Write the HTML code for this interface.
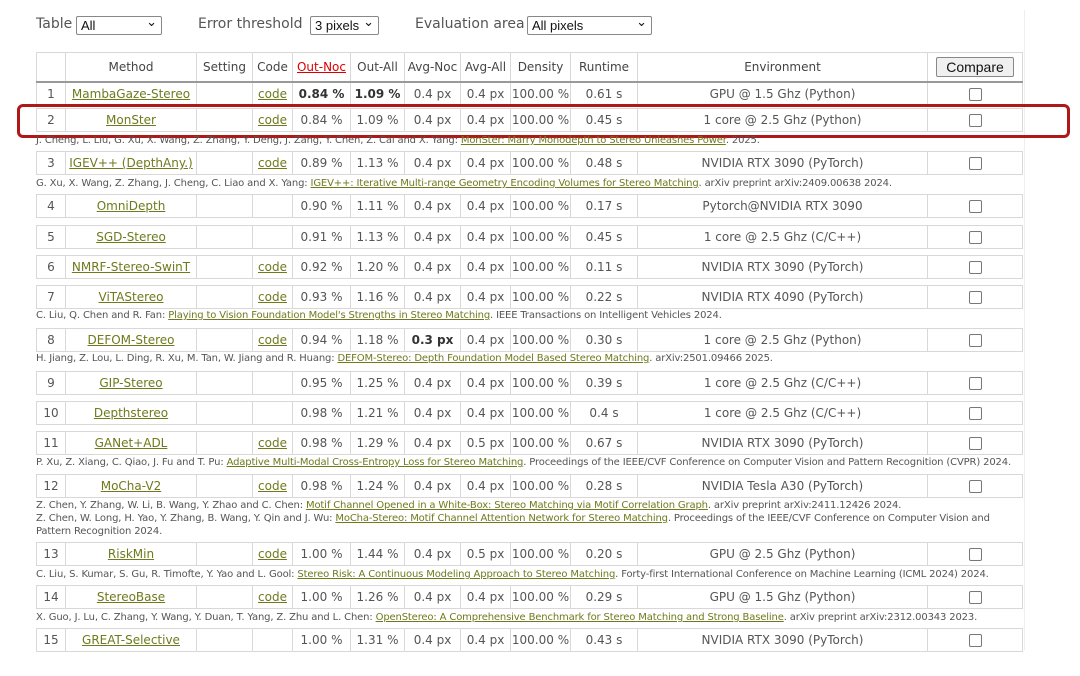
<!DOCTYPE html>
<html><head><meta charset="utf-8"><style>
body{margin:0;width:1080px;height:676px;background:#fff;position:relative;overflow:hidden;font-family:"DejaVu Sans","Liberation Sans",sans-serif;color:#444;}
.lbl{position:absolute;top:16px;font-size:14px;color:#555;}
.sel{position:absolute;top:16px;border:1px solid #888;border-radius:2px;height:19px;font-family:"Liberation Sans",sans-serif;font-size:13px;color:#111;padding:0 4px;box-sizing:border-box;line-height:18px}
.sel:after{content:"⌄";position:absolute;right:4px;top:-4px;font-size:13px;}
table{position:absolute;left:36px;border-collapse:collapse;table-layout:fixed;font-size:12px;}
td{border:1px solid #d8d8d8;text-align:center;padding:0;height:22px;white-space:nowrap;overflow:hidden;color:#555}
th{border:1px solid #d8d8d8;border-bottom:2px solid #999;font-weight:normal;font-size:12px;height:26px;color:#444}
a{color:#6f7a1c;text-decoration:underline}
.red{color:#d00;}
b{color:#333}
.cb{display:inline-block;width:11px;height:11px;border:1px solid #777;border-radius:2px;vertical-align:middle}
.cit{position:absolute;left:36px;width:990px;font-size:10px;color:#555;line-height:13px;font-family:"DejaVu Sans",sans-serif;letter-spacing:-0.15px}
.btn{display:inline-block;border:1px solid #888;background:#f0f0f0;border-radius:2px;font-family:"Liberation Sans",sans-serif;font-size:14px;padding:1px 9px;color:#111}
.box{position:absolute;left:17px;top:104px;width:1047px;height:28px;border:3px solid #b01818;border-radius:6px}
</style></head><body>
<div class="lbl" style="left:36px">Table</div><div class="sel" style="left:76px;width:86px">All</div>
<div class="lbl" style="left:198px">Error threshold</div><div class="sel" style="left:310px;width:69px">3 pixels</div>
<div class="lbl" style="left:415px">Evaluation area</div><div class="sel" style="left:527px;width:125px">All pixels</div>
<div style="position:absolute;left:1024px;top:10px;width:1px;height:640px;background:#eee"></div>

<table style="top:52px"><colgroup><col style="width:29px"><col style="width:131px"><col style="width:56px"><col style="width:40px"><col style="width:58px"><col style="width:54px"><col style="width:56px"><col style="width:50px"><col style="width:60px"><col style="width:67px"><col style="width:290px"><col style="width:95px"></colgroup>
<tr><th></th><th>Method</th><th>Setting</th><th>Code</th><th><a class="red">Out-Noc</a></th><th>Out-All</th><th>Avg-Noc</th><th>Avg-All</th><th>Density</th><th>Runtime</th><th>Environment</th><th><span class="btn">Compare</span></th></tr>
<tr><td>1</td><td><a>MambaGaze-Stereo</a></td><td></td><td><a>code</a></td><td><b>0.84 %</b></td><td><b>1.09 %</b></td><td>0.4 px</td><td>0.4 px</td><td>100.00 %</td><td>0.61 s</td><td>GPU @ 1.5 Ghz (Python)</td><td><span class="cb"></span></td></tr>
</table>

<div id="rows"></div>
<script>
var cols='<colgroup><col style="width:29px"><col style="width:131px"><col style="width:56px"><col style="width:40px"><col style="width:58px"><col style="width:54px"><col style="width:56px"><col style="width:50px"><col style="width:60px"><col style="width:67px"><col style="width:290px"><col style="width:95px"></colgroup>';
var R=[
[108,2,'MonSter',1,'0.84 %','1.09 %','0.4 px','0.4 px','0.45 s','1 core @ 2.5 Ghz (Python)'],
[151,3,'IGEV++ (DepthAny.)',1,'0.89 %','1.13 %','0.4 px','0.4 px','0.48 s','NVIDIA RTX 3090 (PyTorch)'],
[194,4,'OmniDepth',0,'0.90 %','1.11 %','0.4 px','0.4 px','0.17 s','Pytorch@NVIDIA RTX 3090'],
[225,5,'SGD-Stereo',0,'0.91 %','1.13 %','0.4 px','0.4 px','0.45 s','1 core @ 2.5 Ghz (C/C++)'],
[255,6,'NMRF-Stereo-SwinT',1,'0.92 %','1.20 %','0.4 px','0.4 px','0.11 s','NVIDIA RTX 3090 (PyTorch)'],
[285,7,'ViTAStereo',1,'0.93 %','1.16 %','0.4 px','0.4 px','0.22 s','NVIDIA RTX 4090 (PyTorch)'],
[328,8,'DEFOM-Stereo',1,'0.94 %','1.18 %','<b>0.3 px</b>','0.4 px','0.30 s','1 core @ 2.5 Ghz (Python)'],
[371,9,'GIP-Stereo',0,'0.95 %','1.25 %','0.4 px','0.4 px','0.39 s','1 core @ 2.5 Ghz (C/C++)'],
[401,10,'Depthstereo',0,'0.98 %','1.21 %','0.4 px','0.4 px','0.4 s','1 core @ 2.5 Ghz (C/C++)'],
[431,11,'GANet+ADL',1,'0.98 %','1.29 %','0.4 px','0.5 px','0.67 s','NVIDIA RTX 3090 (PyTorch)'],
[474,12,'MoCha-V2',1,'0.98 %','1.24 %','0.4 px','0.4 px','0.28 s','NVIDIA Tesla A30 (PyTorch)'],
[542,13,'RiskMin',1,'1.00 %','1.44 %','0.4 px','0.5 px','0.20 s','GPU @ 2.5 Ghz (Python)'],
[585,14,'StereoBase',1,'1.00 %','1.26 %','0.4 px','0.4 px','0.29 s','GPU @ 1.5 Ghz (Python)'],
[628,15,'GREAT-Selective',0,'1.00 %','1.31 %','0.4 px','0.4 px','0.43 s','NVIDIA RTX 3090 (PyTorch)']];
var h='';
R.forEach(function(r){h+='<table style="top:'+r[0]+'px">'+cols+'<tr><td>'+r[1]+'</td><td><a>'+r[2]+'</a></td><td></td><td>'+(r[3]?'<a>code</a>':'')+'</td><td>'+r[4]+'</td><td>'+r[5]+'</td><td>'+r[6]+'</td><td>'+r[7]+'</td><td>100.00 %</td><td>'+r[8]+'</td><td>'+r[9]+'</td><td><span class="cb"></span></td></tr></table>';});
document.getElementById('rows').innerHTML=h;
</script>
<div class="box"></div>
<div class="cit" style="top:134px">J. Cheng, L. Liu, G. Xu, X. Wang, Z. Zhang, Y. Deng, J. Zang, Y. Chen, Z. Cai and X. Yang: <a>MonSter: Marry Monodepth to Stereo Unleashes Power</a>. 2025.</div>
<div class="cit" style="top:177px">G. Xu, X. Wang, Z. Zhang, J. Cheng, C. Liao and X. Yang: <a>IGEV++: Iterative Multi-range Geometry Encoding Volumes for Stereo Matching</a>. arXiv preprint arXiv:2409.00638 2024.</div>
<div class="cit" style="top:309px">C. Liu, Q. Chen and R. Fan: <a>Playing to Vision Foundation Model's Strengths in Stereo Matching</a>. IEEE Transactions on Intelligent Vehicles 2024.</div>
<div class="cit" style="top:352px">H. Jiang, Z. Lou, L. Ding, R. Xu, M. Tan, W. Jiang and R. Huang: <a>DEFOM-Stereo: Depth Foundation Model Based Stereo Matching</a>. arXiv:2501.09466 2025.</div>
<div class="cit" style="top:456px">P. Xu, Z. Xiang, C. Qiao, J. Fu and T. Pu: <a>Adaptive Multi-Modal Cross-Entropy Loss for Stereo Matching</a>. Proceedings of the IEEE/CVF Conference on Computer Vision and Pattern Recognition (CVPR) 2024.</div>
<div class="cit" style="top:499px">Z. Chen, Y. Zhang, W. Li, B. Wang, Y. Zhao and C. Chen: <a>Motif Channel Opened in a White-Box: Stereo Matching via Motif Correlation Graph</a>. arXiv preprint arXiv:2411.12426 2024.<br>Z. Chen, W. Long, H. Yao, Y. Zhang, B. Wang, Y. Qin and J. Wu: <a>MoCha-Stereo: Motif Channel Attention Network for Stereo Matching</a>. Proceedings of the IEEE/CVF Conference on Computer Vision and Pattern Recognition 2024.</div>
<div class="cit" style="top:568px">C. Liu, S. Kumar, S. Gu, R. Timofte, Y. Yao and L. Gool: <a>Stereo Risk: A Continuous Modeling Approach to Stereo Matching</a>. Forty-first International Conference on Machine Learning (ICML 2024) 2024.</div>
<div class="cit" style="top:611px">X. Guo, J. Lu, C. Zhang, Y. Wang, Y. Duan, T. Yang, Z. Zhu and L. Chen: <a>OpenStereo: A Comprehensive Benchmark for Stereo Matching and Strong Baseline</a>. arXiv preprint arXiv:2312.00343 2023.</div>
</body></html>
